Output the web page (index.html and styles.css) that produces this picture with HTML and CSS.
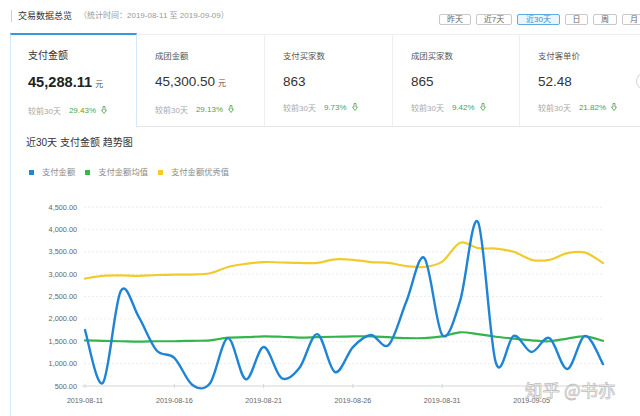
FILE: index.html
```html
<!DOCTYPE html>
<html lang="zh-CN">
<head>
<meta charset="utf-8">
<title>交易数据总览</title>
<link rel="stylesheet" href="styles.css">
</head>
<body>
<div class="header">
  <div class="title">交易数据总览</div>
  <div class="sub">（统计时间：2019-08-11 至 2019-09-09）</div>
  <div class="btns">
    <span class="btn btn-32">昨天</span>
    <span class="btn btn-36">近7天</span>
    <span class="btn btn-43 btn-on">近30天</span>
    <span class="btn btn-23">日</span>
    <span class="btn btn-24">周</span>
    <span class="btn btn-24">月</span>
  </div>
</div>

<div class="cards">
  <div class="card card-on">
    <div class="label">支付金额</div>
    <div class="value">45,288.11<span class="unit">元</span></div>
    <div class="cmp"><span class="cmp-l">较前30天</span><span class="pct">29.43%</span><svg class="arr" viewBox="0 0 6 8"><path d="M2 .5H4V4H5.5L3 7.5.5 4H2Z"/></svg></div>
  </div>
  <div class="card">
    <div class="label">成团金额</div>
    <div class="value">45,300.50<span class="unit">元</span></div>
    <div class="cmp"><span class="cmp-l">较前30天</span><span class="pct">29.13%</span><svg class="arr" viewBox="0 0 6 8"><path d="M2 .5H4V4H5.5L3 7.5.5 4H2Z"/></svg></div>
  </div>
  <div class="card">
    <div class="label">支付买家数</div>
    <div class="value">863</div>
    <div class="cmp"><span class="cmp-l">较前30天</span><span class="pct">9.73%</span><svg class="arr" viewBox="0 0 6 8"><path d="M2 .5H4V4H5.5L3 7.5.5 4H2Z"/></svg></div>
  </div>
  <div class="card card-n">
    <div class="label">成团买家数</div>
    <div class="value">865</div>
    <div class="cmp"><span class="cmp-l">较前30天</span><span class="pct">9.42%</span><svg class="arr" viewBox="0 0 6 8"><path d="M2 .5H4V4H5.5L3 7.5.5 4H2Z"/></svg></div>
  </div>
  <div class="card card-last">
    <div class="label">支付客单价</div>
    <div class="value">52.48</div>
    <div class="cmp"><span class="cmp-l">较前30天</span><span class="pct">21.82%</span><svg class="arr" viewBox="0 0 6 8"><path d="M2 .5H4V4H5.5L3 7.5.5 4H2Z"/></svg></div>
  </div>
  <span class="nav"></span>
</div>

<div class="panel">
  <div class="ctitle">近30天 支付金额 趋势图</div>
  <div class="legend">
    <span class="lg"><i class="sw sw-blue"></i>支付金额</span>
    <span class="lg"><i class="sw sw-green"></i>支付金额均值</span>
    <span class="lg"><i class="sw sw-yellow"></i>支付金额优秀值</span>
  </div>
  <svg class="chart" width="629" height="226" viewBox="11 190 629 226">
    <g class="grid">
      <line x1="84" y1="207" x2="604" y2="207"/>
      <line x1="84" y1="229.4" x2="604" y2="229.4"/>
      <line x1="84" y1="251.8" x2="604" y2="251.8"/>
      <line x1="84" y1="274.1" x2="604" y2="274.1"/>
      <line x1="84" y1="296.5" x2="604" y2="296.5"/>
      <line x1="84" y1="318.9" x2="604" y2="318.9"/>
      <line x1="84" y1="341.3" x2="604" y2="341.3"/>
      <line x1="84" y1="363.6" x2="604" y2="363.6"/>
    </g>
    <line class="axis" x1="82" y1="386" x2="604" y2="386"/>
    <g class="ticks">
      <line x1="85" y1="384" x2="85" y2="388"/>
      <line x1="174.3" y1="384" x2="174.3" y2="388"/>
      <line x1="263.6" y1="384" x2="263.6" y2="388"/>
      <line x1="352.9" y1="384" x2="352.9" y2="388"/>
      <line x1="442.2" y1="384" x2="442.2" y2="388"/>
      <line x1="531.6" y1="384" x2="531.6" y2="388"/>
    </g>
    <g class="ylab">
      <text x="77" y="209.5">4,500.00</text>
      <text x="77" y="231.9">4,000.00</text>
      <text x="77" y="254.3">3,500.00</text>
      <text x="77" y="276.6">3,000.00</text>
      <text x="77" y="299">2,500.00</text>
      <text x="77" y="321.4">2,000.00</text>
      <text x="77" y="343.8">1,500.00</text>
      <text x="77" y="366.1">1,000.00</text>
      <text x="77" y="388.5">500.00</text>
    </g>
    <g class="xlab">
      <text x="85" y="402.5">2019-08-11</text>
      <text x="174.3" y="402.5">2019-08-16</text>
      <text x="263.6" y="402.5">2019-08-21</text>
      <text x="352.9" y="402.5">2019-08-26</text>
      <text x="442.2" y="402.5">2019-08-31</text>
      <text x="531.6" y="402.5">2019-09-05</text>
    </g>
    <path id="l-yellow" class="ln ln-yellow" d=""/>
    <path id="l-green" class="ln ln-green" d=""/>
    <path id="l-blue" class="ln ln-blue" d=""/>
  </svg>
  <div class="wm">知乎 @书亦</div>
</div>
<script src="script.js"></script>
</body>
</html>
```

FILE: styles.css
```css
* { box-sizing: border-box; margin: 0; padding: 0; }
html, body { width: 640px; height: 416px; overflow: hidden; background: #fff; }
body {
  font-family: "Liberation Sans", "Noto Sans CJK SC", sans-serif;
  color: #333;
}

/* header */
.header { display: flex; align-items: flex-start; height: 33px; }
.title {
  margin: 10px 0 0 11px;
  height: 12px;
  line-height: 12px;
  border-left: 1px solid #b9d7ea;
  padding-left: 6px;
  font-size: 9px;
  color: #333;
}
.sub { margin: 10px 0 0 7px; line-height: 12px; font-size: 8px; color: #999; }
.btns { display: flex; gap: 5px; margin: 14px -6px 0 auto; }
.btn {
  display: block;
  height: 11px;
  line-height: 9px;
  border: 1px solid #c8c8c8;
  border-radius: 2px;
  font-size: 8px;
  color: #666;
  text-align: center;
  background: #fff;
}
.btn-32 { width: 32px; }
.btn-36 { width: 36px; }
.btn-43 { width: 43px; }
.btn-23 { width: 23px; }
.btn-24 { width: 24px; }
.btn-on { border-color: #5eaae2; background: #eaf5fd; color: #3a8fd0; }

/* cards */
.cards {
  display: flex;
  align-items: flex-start;
  margin-left: 10px;
  height: 94px;
  border-bottom: 1px solid #e6e6e6;
  position: relative;
}
.card {
  width: 128px;
  height: 92px;
  margin-top: 1px;
  border-top: 1px solid #eeeeee;
  border-right: 1px solid #eeeeee;
  padding: 15px 0 0 18px;
  background: #fff;
  flex: none;
}
.card-n { width: 127px; }
.card-last { flex: 1; border-right: none; }
.card-on {
  width: 127px;
  height: 94px;
  margin-top: 0;
  border-top: 2px solid #3b97dc;
  border-left: 1px solid #d2e9f7;
  border-right: 1px solid #d2e9f7;
  padding: 14px 0 0 17px;
}
.label { font-size: 8.4px; line-height: 12px; color: #555; }
.card-on .label { font-size: 10px; line-height: 14px; color: #333; }
.value {
  margin-top: 11px;
  font-size: 13.5px;
  line-height: 18px;
  color: #333;
  white-space: nowrap;
}
.card-on .value { margin-top: 10px; font-size: 14.6px; font-weight: bold; color: #222; }
.unit { font-size: 8px; font-weight: normal; margin-left: 3px; color: #555; }
.cmp {
  display: flex;
  align-items: center;
  margin-top: 11px;
  height: 10px;
  font-size: 8px;
  white-space: nowrap;
}
.cmp-l { color: #a8a8a8; }
.pct { color: #4aa54a; margin-left: 8px; }
.arr { width: 6px; height: 8px; margin-left: 5px; fill: none; stroke: #4aa54a; stroke-width: .8; }
.nav {
  position: absolute;
  right: -14px;
  top: 39px;
  width: 18px;
  height: 18px;
  border: 1px solid #d5d5d5;
  border-radius: 50%;
  background: #fff;
}

/* chart panel */
.panel {
  position: relative;
  margin-left: 10px;
  height: 289px;
  border-left: 1px solid #d2e9f7;
}
.ctitle { padding: 9px 0 0 15px; font-size: 10px; line-height: 14px; color: #333; }
.legend { display: flex; margin-top: 17px; padding-left: 18px; height: 10px; }
.lg { display: flex; align-items: center; gap: 8px; margin-right: 10px; font-size: 8.3px; line-height: 10px; color: #8a8a8a; }
.sw { display: block; width: 5px; height: 5px; }
.sw-blue { background: #1f86d8; }
.sw-green { background: #35b84a; }
.sw-yellow { background: #f2cc2c; }
.chart { display: block; margin-top: 13px; overflow: visible; }
.grid line { stroke: #ececec; stroke-width: 1; stroke-dasharray: 2 2; }
.axis { stroke: #d6d6d6; stroke-width: 1; }
.ticks line { stroke: #d6d6d6; stroke-width: 1; }
.ylab text { font-size: 7.3px; fill: #666; text-anchor: end; }
.xlab text { font-size: 7.2px; fill: #666; text-anchor: middle; }
.ln { fill: none; stroke-width: 2.2; stroke-linejoin: round; stroke-linecap: round; }
.ln-blue { stroke: #1f84d6; stroke-width: 2.4; }
.ln-green { stroke: #33b54b; }
.ln-yellow { stroke: #f1cb2b; }
.wm {
  position: absolute;
  left: 514px;
  top: 252px;
  font-size: 17.5px;
  line-height: 22px;
  color: rgba(255, 255, 255, 0.92);
  -webkit-text-stroke: 0.45px #a8a8a8;
  text-shadow: 0 0 1px rgba(150, 150, 150, 0.5);
  font-family: "Noto Sans CJK SC", "Liberation Sans", sans-serif;
  white-space: nowrap;
}
```

FILE: script.js
```js
(function () {
  var X0 = 85, X1 = 603, N = 30, DX = (X1 - X0) / (N - 1);
  function Y(v) { return 386 - (v - 500) * 179 / 4000; }
  function f(n) { return n.toFixed(2); }
  function path(data) {
    var pts = data.map(function (v, i) { return [X0 + DX * i, Y(v)]; });
    var d = 'M' + f(pts[0][0]) + ',' + f(pts[0][1]);
    for (var i = 0; i < pts.length - 1; i++) {
      var p0 = pts[i - 1] || pts[i], p1 = pts[i], p2 = pts[i + 1], p3 = pts[i + 2] || p2;
      var c1x = p1[0] + (p2[0] - p0[0]) / 6, c1y = p1[1] + (p2[1] - p0[1]) / 6;
      var c2x = p2[0] - (p3[0] - p1[0]) / 6, c2y = p2[1] - (p3[1] - p1[1]) / 6;
      d += ' C' + f(c1x) + ',' + f(c1y) + ' ' + f(c2x) + ',' + f(c2y) + ' ' + f(p2[0]) + ',' + f(p2[1]);
    }
    return d;
  }
  var blue = [1750, 570, 2620, 2050, 1300, 1130, 530, 560, 1570, 650, 1370, 680, 900, 1660, 810, 1370, 1640, 1420, 2400, 3360, 1640, 2400, 4165, 1020, 1620, 1260, 1570, 880, 1620, 990];
  var green = [1520, 1510, 1500, 1490, 1500, 1500, 1510, 1520, 1580, 1590, 1610, 1600, 1580, 1590, 1600, 1610, 1610, 1590, 1570, 1570, 1610, 1700, 1660, 1600, 1560, 1520, 1500, 1560, 1610, 1510];
  var yellow = [2900, 2960, 2970, 2960, 2980, 2990, 2990, 3020, 3160, 3230, 3270, 3260, 3250, 3250, 3330, 3320, 3270, 3250, 3180, 3160, 3280, 3700, 3580, 3570, 3500, 3320, 3320, 3470, 3480, 3250];
  document.getElementById('l-blue').setAttribute('d', path(blue));
  document.getElementById('l-green').setAttribute('d', path(green));
  document.getElementById('l-yellow').setAttribute('d', path(yellow));
})();
```
